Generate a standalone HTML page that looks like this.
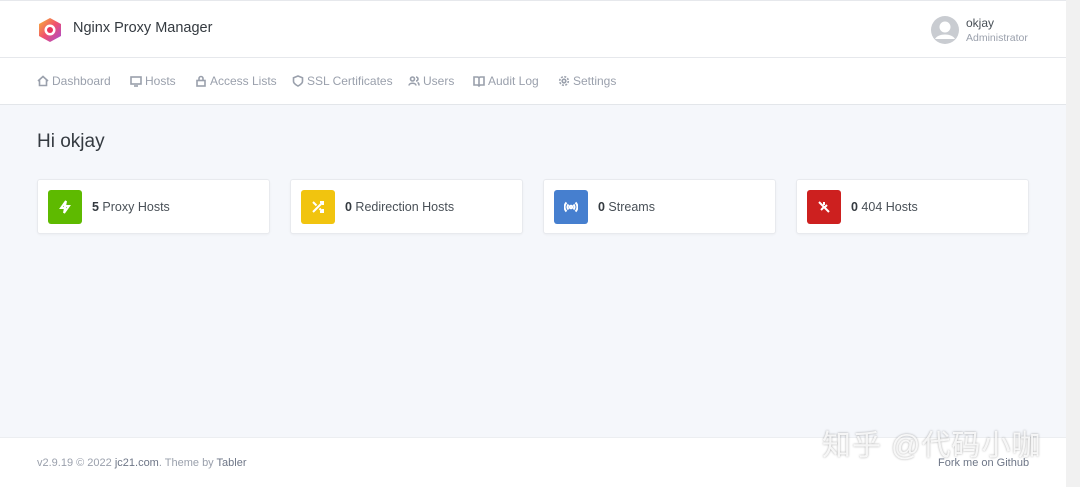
<!DOCTYPE html><html><head><meta charset="utf-8"><style>
*{box-sizing:border-box;margin:0;padding:0}
body{width:1080px;height:487px;overflow:hidden;background:#f5f7fb;font-family:"Liberation Sans","Noto Sans CJK SC",sans-serif;position:relative;color:#495057}
.top{position:absolute;left:0;top:0;width:1066px;height:58px;background:#fff;border-top:1px solid #e6e8ec;border-bottom:1px solid #e6e8ec}
.nav{position:absolute;left:0;top:58px;width:1066px;height:47px;background:#fff;border-bottom:1px solid #e3e6ea}
.nav span{position:absolute;top:16px;font-size:12px;color:#9aa0ac;display:flex;align-items:center;gap:3px}
.nav svg{width:12px;height:12px;stroke:#9aa0ac;fill:none;stroke-width:1.6}
.card{position:absolute;top:179px;width:233px;height:55px;background:#fff;border:1px solid #e8eaee;border-radius:3px;box-shadow:0 1px 2px rgba(0,0,0,.04)}
.ic{position:absolute;left:10px;top:10px;width:34px;height:34px;border-radius:3px;display:flex;align-items:center;justify-content:center}
.ic svg{width:14px;height:14px;stroke:#fff;fill:none;stroke-width:2}
.card .t{position:absolute;left:54px;top:20px;font-size:12.5px;color:#495057}
.card b{color:#343a40}
.foot{position:absolute;left:0;top:437px;width:1066px;height:50px;background:#fff;border-top:1px solid #eceef1}
.sb{position:absolute;right:0;top:0;width:14px;height:487px;background:#f1f1f1}
</style></head><body>
<div class="top">
<svg style="position:absolute;left:38px;top:16px" width="24" height="26" viewBox="0 0 24 26"><defs><linearGradient id="g" x1="0" y1="0" x2="1" y2="1"><stop offset="0" stop-color="#f7b733"/><stop offset=".5" stop-color="#f0506e"/><stop offset="1" stop-color="#a44cd6"/></linearGradient></defs><polygon points="12,1 23,7 23,19 12,25 1,19 1,7" fill="url(#g)"/><circle cx="12" cy="13" r="5.5" fill="#fff"/><circle cx="12" cy="13" r="3" fill="#e8365c"/></svg>
<div style="position:absolute;left:73px;top:19px;font-size:14.5px;color:#343a40">Nginx Proxy Manager</div>
<svg style="position:absolute;left:931px;top:15px" width="28" height="28" viewBox="0 0 28 28"><circle cx="14" cy="14" r="14" fill="#c9ccd1"/><circle cx="14" cy="11" r="5.5" fill="#fff"/><path d="M4 23c3-6 17-6 20 0" fill="#fff"/></svg>
<div style="position:absolute;left:966px;top:15px;font-size:12px;color:#495057">okjay</div>
<div style="position:absolute;left:966px;top:31px;font-size:10.5px;color:#9aa0ac">Administrator</div>
</div>
<div class="nav">
<span style="left:37px"><svg viewBox="0 0 12 12"><path d="M1 6L6 1.5 11 6M2.5 5v5.5h7V5"/></svg>Dashboard</span>
<span style="left:130px"><svg viewBox="0 0 12 12"><rect x="1" y="2" width="10" height="7"/><path d="M4 11h4"/></svg>Hosts</span>
<span style="left:195px"><svg viewBox="0 0 12 12"><rect x="2" y="5.5" width="8" height="5.5"/><path d="M4 5.5V3.5a2 2 0 014 0v2"/></svg>Access Lists</span>
<span style="left:292px"><svg viewBox="0 0 12 12"><path d="M6 1l4.5 1.8v3.5C10.5 9 6 11 6 11S1.5 9 1.5 6.3V2.8z"/></svg>SSL Certificates</span>
<span style="left:408px"><svg viewBox="0 0 12 12"><circle cx="4.5" cy="4" r="2"/><path d="M1 10.5c0-3 7-3 7 0M8 2a2 2 0 010 4M9.5 7.5c1.5.5 1.5 2 1.5 3"/></svg>Users</span>
<span style="left:473px"><svg viewBox="0 0 12 12"><path d="M1 2h4l1 1 1-1h4v8H7l-1 1-1-1H1zM6 3v8"/></svg>Audit Log</span>
<span style="left:558px"><svg viewBox="0 0 12 12"><circle cx="6" cy="6" r="1.8"/><circle cx="6" cy="6" r="4.3" stroke-dasharray="2 1.4"/></svg>Settings</span>
</div>
<div style="position:absolute;left:37px;top:131px;font-size:19px;color:#343a40">Hi okjay</div>
<div class="card" style="left:37px"><div class="ic" style="background:#5eba00"><svg viewBox="0 0 14 14"><path d="M8 1L3 8h4l-1 5 5-7H7z"/></svg></div><div class="t"><b>5</b> Proxy Hosts</div></div>
<div class="card" style="left:290px"><div class="ic" style="background:#f1c40f"><svg viewBox="0 0 14 14"><path d="M9 2h3v3M2 12L12 2M12 9v3H9M8.5 8.5L12 12M2 2l3.5 3.5"/></svg></div><div class="t"><b>0</b> Redirection Hosts</div></div>
<div class="card" style="left:543px"><div class="ic" style="background:#467fcf"><svg viewBox="0 0 14 14"><circle cx="7" cy="7" r="1.3"/><path d="M4.5 4.5a3.5 3.5 0 000 5M9.5 4.5a3.5 3.5 0 010 5M2.5 2.5a6.3 6.3 0 000 9M11.5 2.5a6.3 6.3 0 010 9"/></svg></div><div class="t"><b>0</b> Streams</div></div>
<div class="card" style="left:796px"><div class="ic" style="background:#cd201f"><svg viewBox="0 0 14 14"><path d="M2 2l10 10M7 2v3M4 4l3 3-3 3M10 5l-2 2"/></svg></div><div class="t"><b>0</b> 404 Hosts</div></div>
<div class="foot">
<div style="position:absolute;left:37px;top:19px;font-size:11px;color:#9aa0ac">v2.9.19 © 2022 <span style="color:#6e7687">jc21.com</span>. Theme by <span style="color:#6e7687">Tabler</span></div>
<div style="position:absolute;left:938px;top:19px;font-size:11px;color:#6e7687">Fork me on Github</div>
</div>
<div style="position:absolute;left:822px;top:422px;font-size:29px;color:rgba(255,255,255,.85);text-shadow:0 0 2px rgba(0,0,0,.35);letter-spacing:1px">知乎 @代码小咖</div>
<div class="sb"></div>
</body></html>
